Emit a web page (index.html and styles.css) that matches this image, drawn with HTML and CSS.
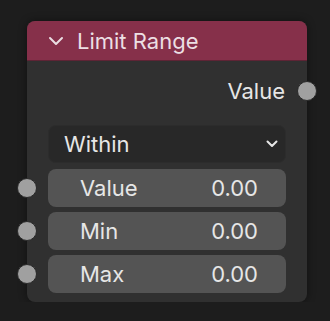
FILE: index.html
```html
<!DOCTYPE html>
<html lang="en">
<head>
    <meta charset="UTF-8">
    <meta name="viewport" content="width=device-width, initial-scale=1.0">
    <title>Limit Range</title>
    <link rel="stylesheet" href="styles.css">
</head>
<body>
    <div class="node">
        <div class="node-header">
            <svg class="collapse-icon" width="16" height="10" viewBox="0 0 16 10">
                <polyline points="2,2 8,8 14,2" fill="none" stroke="#eadde2" stroke-width="2" stroke-linecap="round" stroke-linejoin="round"/>
            </svg>
            <span class="node-title">Limit Range</span>
        </div>
        <div class="node-body">
            <div class="output-row">
                <span>Value</span>
                <span class="socket socket-out"></span>
            </div>
            <div class="dropdown">
                <span>Within</span>
                <svg width="12" height="8" viewBox="0 0 12 8">
                    <polyline points="1.5,1.5 6,6 10.5,1.5" fill="none" stroke="#e6e6e6" stroke-width="2" stroke-linecap="round" stroke-linejoin="round"/>
                </svg>
            </div>
            <div class="field">
                <span class="socket socket-in"></span>
                <span>Value</span>
                <span>0.00</span>
            </div>
            <div class="field">
                <span class="socket socket-in"></span>
                <span>Min</span>
                <span>0.00</span>
            </div>
            <div class="field">
                <span class="socket socket-in"></span>
                <span>Max</span>
                <span>0.00</span>
            </div>
        </div>
    </div>
</body>
</html>
```

FILE: styles.css
```css
body {
    margin: 0;
    background: #1d1d1d;
    font-family: Inter, "Noto Sans", sans-serif;
    font-size: 22px;
    color: #e6e6e6;
}

.node {
    margin: 21px 0 0 27px;
    width: 280px;
    height: 281px;
    background: #303030;
    border-radius: 8px;
    box-shadow: 0 0 8px rgba(0, 0, 0, 0.45);
}

.node-header {
    height: 40px;
    box-sizing: border-box;
    background: #86304a;
    border-radius: 8px 8px 0 0;
    border-bottom: 1px solid #5e2435;
    display: flex;
    align-items: center;
    padding-left: 21px;
    gap: 13px;
}

.node-title {
    color: #ecdfe3;
}

.node-body {
    padding: 10px 21px 10px;
    display: flex;
    flex-direction: column;
}

.output-row {
    position: relative;
    height: 40px;
    display: flex;
    align-items: center;
    justify-content: flex-end;
    padding-right: 1px;
}

.socket {
    position: absolute;
    top: 50%;
    width: 18px;
    height: 18px;
    margin-top: -10px;
    border-radius: 50%;
    background: #a0a0a0;
    border: 1px solid #2a2a2a;
}

.socket-out {
    right: -31px;
}

.socket-in {
    left: -31px;
}

.dropdown {
    margin-top: 14px;
    height: 38px;
    box-sizing: border-box;
    background: #282828;
    border: 1px solid #2c2c2c;
    border-radius: 8px;
    display: flex;
    align-items: center;
    justify-content: space-between;
    padding: 0 7px 0 15px;
}

.field {
    position: relative;
    margin-top: 5px;
    height: 38px;
    background: #545454;
    border-radius: 8px;
    display: flex;
    align-items: center;
    justify-content: space-between;
    padding: 0 28px 0 32px;
}

.dropdown + .field {
    margin-top: 6px;
}
```
